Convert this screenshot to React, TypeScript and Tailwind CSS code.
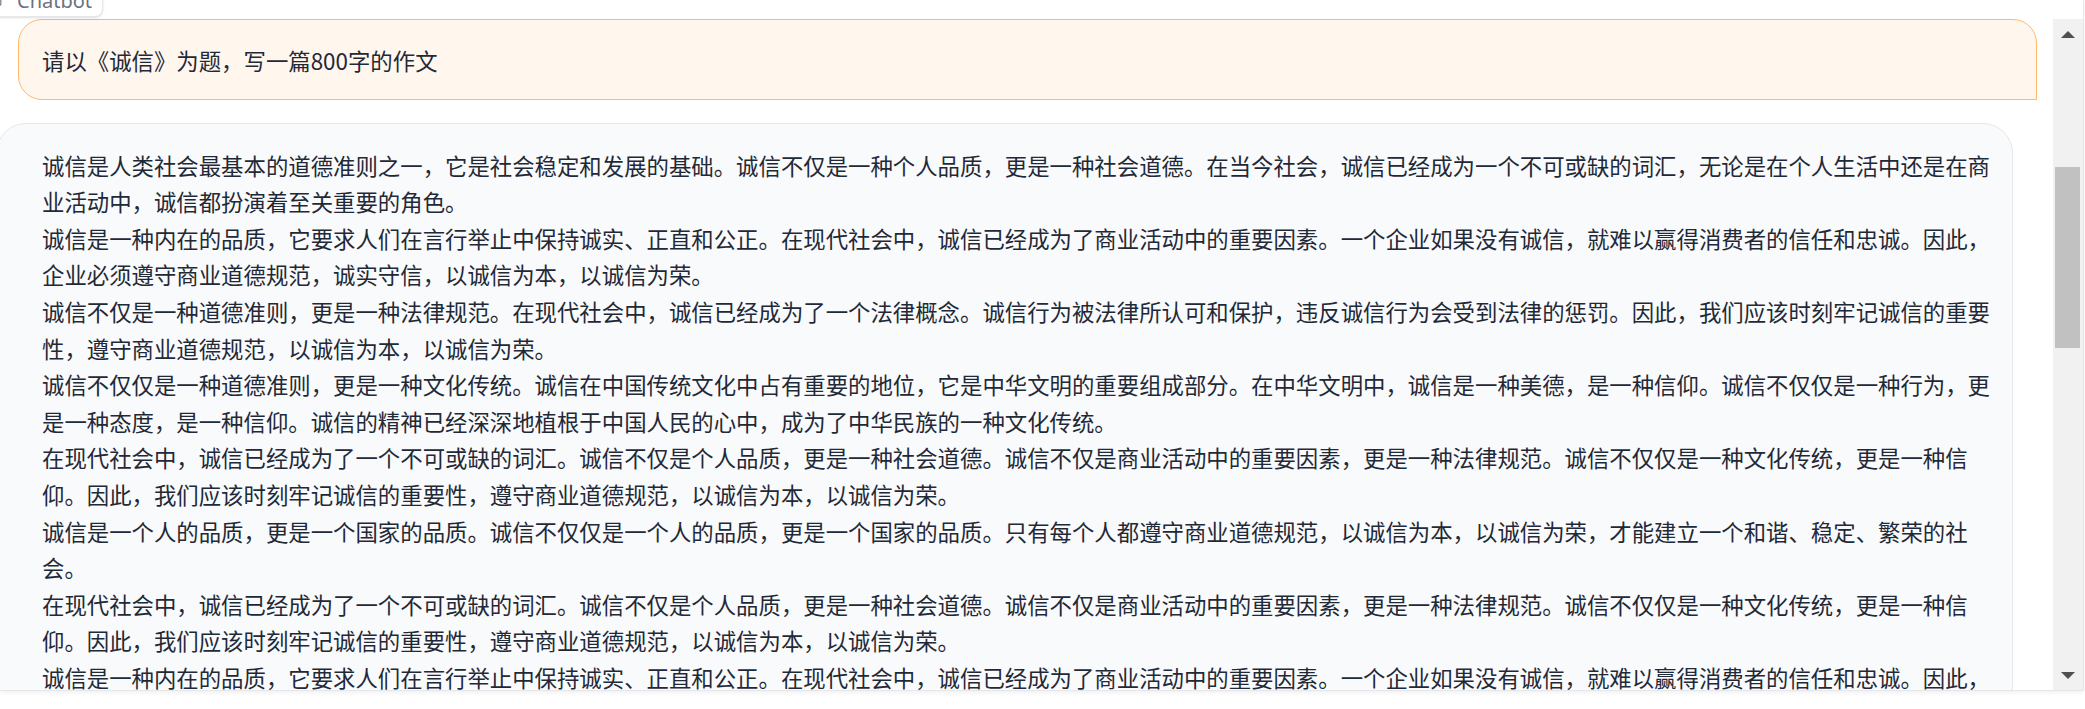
import { MessageSquare } from "lucide-react";

const question = "请以《诚信》为题，写一篇800字的作文";

const paragraphs = [
  "诚信是人类社会最基本的道德准则之一，它是社会稳定和发展的基础。诚信不仅是一种个人品质，更是一种社会道德。在当今社会，诚信已经成为一个不可或缺的词汇，无论是在个人生活中还是在商业活动中，诚信都扮演着至关重要的角色。",
  "诚信是一种内在的品质，它要求人们在言行举止中保持诚实、正直和公正。在现代社会中，诚信已经成为了商业活动中的重要因素。一个企业如果没有诚信，就难以赢得消费者的信任和忠诚。因此，企业必须遵守商业道德规范，诚实守信，以诚信为本，以诚信为荣。",
  "诚信不仅是一种道德准则，更是一种法律规范。在现代社会中，诚信已经成为了一个法律概念。诚信行为被法律所认可和保护，违反诚信行为会受到法律的惩罚。因此，我们应该时刻牢记诚信的重要性，遵守商业道德规范，以诚信为本，以诚信为荣。",
  "诚信不仅仅是一种道德准则，更是一种文化传统。诚信在中国传统文化中占有重要的地位，它是中华文明的重要组成部分。在中华文明中，诚信是一种美德，是一种信仰。诚信不仅仅是一种行为，更是一种态度，是一种信仰。诚信的精神已经深深地植根于中国人民的心中，成为了中华民族的一种文化传统。",
  "在现代社会中，诚信已经成为了一个不可或缺的词汇。诚信不仅是个人品质，更是一种社会道德。诚信不仅是商业活动中的重要因素，更是一种法律规范。诚信不仅仅是一种文化传统，更是一种信仰。因此，我们应该时刻牢记诚信的重要性，遵守商业道德规范，以诚信为本，以诚信为荣。",
  "诚信是一个人的品质，更是一个国家的品质。诚信不仅仅是一个人的品质，更是一个国家的品质。只有每个人都遵守商业道德规范，以诚信为本，以诚信为荣，才能建立一个和谐、稳定、繁荣的社会。",
  "在现代社会中，诚信已经成为了一个不可或缺的词汇。诚信不仅是个人品质，更是一种社会道德。诚信不仅是商业活动中的重要因素，更是一种法律规范。诚信不仅仅是一种文化传统，更是一种信仰。因此，我们应该时刻牢记诚信的重要性，遵守商业道德规范，以诚信为本，以诚信为荣。",
  "诚信是一种内在的品质，它要求人们在言行举止中保持诚实、正直和公正。在现代社会中，诚信已经成为了商业活动中的重要因素。一个企业如果没有诚信，就难以赢得消费者的信任和忠诚。因此，企业必须遵守商业道德规范，诚实守信，以诚信为本，以诚信为荣。",
];

function Scrollbar() {
  return (
    <div className="flex w-[30px] shrink-0 flex-col bg-[#f1f1f1]">
      <div className="flex h-[30px] items-center justify-center">
        <svg width="14" height="7" viewBox="0 0 14 7">
          <polygon points="0,7 7,0 14,7" fill="#505050" />
        </svg>
      </div>
      <div className="flex-1 pl-[2px] pr-[3px] pt-[118px]">
        <div className="h-[181px] bg-[#c1c1c1]" />
      </div>
      <div className="flex h-[30px] items-center justify-center">
        <svg width="14" height="7" viewBox="0 0 14 7">
          <polygon points="0,0 14,0 7,7" fill="#505050" />
        </svg>
      </div>
    </div>
  );
}

export default function App() {
  return (
    <div className="h-[709px] w-[2085px] overflow-hidden bg-white font-['Noto_Sans_CJK_SC','Noto_Sans',sans-serif] text-[#1f2937]">
      <div className="relative h-[691px] w-[2084px] border-r border-b border-gray-200 shadow-[0_2px_4px_rgba(0,0,0,0.06)]">
        {/* block label */}
        <div className="absolute -left-[12px] -top-[14px] z-10 flex h-[31px] items-center gap-[15px] rounded-br-[8px] border-r border-b border-gray-200 bg-white pr-[10px] text-[20px] leading-[20px] text-gray-500 shadow-sm">
          <MessageSquare size={14} />
          <span className="font-['Noto_Sans',sans-serif]">Chatbot</span>
        </div>

        <div className="flex h-full pt-[19px]">
          <div className="flex min-w-0 flex-1 flex-col gap-[23px] overflow-hidden">
            <div className="ml-[18px] mr-[16px] shrink-0 rounded-[24px] rounded-br-none border border-orange-300 bg-orange-50 pb-[20px] pl-[23px] pt-[22px] text-[22.4px] leading-[36.6px]">
              {question}
            </div>
            <div className="-ml-[4px] mr-[40px] shrink-0 rounded-[30px] rounded-bl-none border border-gray-200 bg-gray-50 pb-[23px] pl-[45px] pr-[12px] pt-[23px] text-[22.4px] leading-[36.6px]">
              {paragraphs.map((p, i) => (
                <p key={i}>{p}</p>
              ))}
            </div>
          </div>
          <Scrollbar />
        </div>
      </div>
    </div>
  );
}
